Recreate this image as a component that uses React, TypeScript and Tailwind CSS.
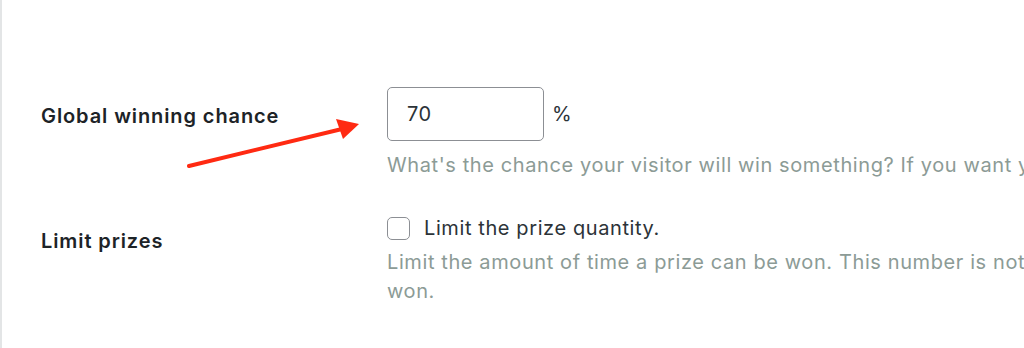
import React from "react";

export default function App() {
  const font = { fontFamily: "Inter, 'Noto Sans', sans-serif" };
  return (
    <div className="relative w-[1024px] h-[348px] bg-white overflow-hidden border-l-2 border-[#e3e5e6]" style={font}>
      <div className="pt-[87px] flex flex-col">
        {/* Row 1 */}
        <div className="flex">
          <div className="w-[385px] pl-[39px] pt-[17px] text-[20px] font-semibold tracking-[0.045em] text-[#1d2327] leading-[24px] shrink-0 whitespace-nowrap">
            Global winning chance
          </div>
          <div className="flex flex-col">
            <div className="flex items-center">
              <div className="w-[157px] h-[54px] border border-[#8c8f94] rounded-[5px] flex items-center pl-[19px] text-[20px] tracking-[0.02em] text-[#2c3338]">
                70
              </div>
              <span className="ml-[8px] text-[20px] text-[#2c3338]">%</span>
            </div>
            <div className="mt-[12px] text-[20px] tracking-[0.03em] leading-[24px] text-[#8c9b96] whitespace-nowrap">
              What's the chance your visitor will win something? If you want you
            </div>
          </div>
        </div>
        {/* Row 2 */}
        <div className="flex mt-[39px]">
          <div className="w-[385px] pl-[39px] pt-[13px] text-[20px] font-semibold tracking-[0.045em] text-[#1d2327] leading-[24px] shrink-0 whitespace-nowrap">
            Limit prizes
          </div>
          <div className="flex flex-col">
            <div className="flex items-center">
              <div className="w-[23px] h-[23px] border-[1.5px] border-[#8c8f94] rounded-[5px]" />
              <span className="ml-[14px] text-[20px] tracking-[0.03em] text-[#2c3338] leading-[24px]">Limit the prize quantity.</span>
            </div>
            <div className="mt-[8px] text-[20px] tracking-[0.03em] leading-[29px] text-[#8c9b96]">
              <div className="whitespace-nowrap">Limit the amount of time a prize can be won. This number is not</div>
              <div>won.</div>
            </div>
          </div>
        </div>
      </div>
      <svg className="absolute left-0 top-0" width="1024" height="348" viewBox="0 0 1024 348">
        <line x1="187" y1="166" x2="340" y2="129" stroke="#ff2a12" strokeWidth="4" strokeLinecap="round" />
        <polygon points="357,124 334,119 341,139" fill="#ff2a12" />
      </svg>
    </div>
  );
}
